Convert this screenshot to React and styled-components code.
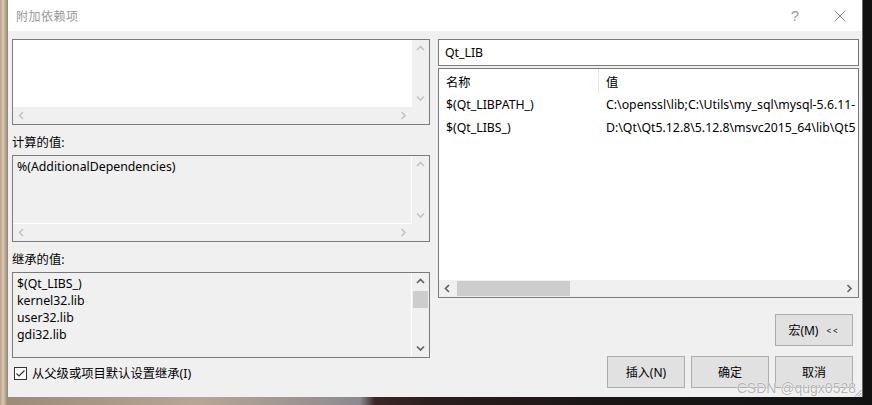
import React from 'react';
import styled, { createGlobalStyle } from 'styled-components';

const GlobalStyle = createGlobalStyle`
  html, body {
    margin: 0;
    padding: 0;
  }
  body {
    width: 872px;
    height: 405px;
    overflow: hidden;
    font-family: "Noto Sans", "Noto Sans CJK SC", sans-serif;
    font-size: 12.3px;
    color: #000;
  }
`;

// wallpaper peeking round the dialog
const Desktop = styled.div`
  width: 872px;
  height: 405px;
  padding-left: 7px;
  box-sizing: border-box;
  background:
    linear-gradient(90deg, transparent 0 863px, #111 863px),
    radial-gradient(ellipse 6px 14px at 868px 48px, #d8d4c8, transparent),
    linear-gradient(90deg, #b9a083 0, #d8c9b6 3px, #a89074 7px, transparent 7px),
    linear-gradient(90deg, #9c8a78 0, #b7a595 200px, #8c8a90 360px, #3a2626 375px, #2a1d1d 440px, #1a1616 600px, #121212 872px);
`;

const Dialog = styled.div`
  position: relative;
  width: 856px;
  height: 397px;
  background: #f0f0f0;
  border-left: 1px solid #8c8c8c;
  border-right: 1px solid #6b6b6b;
  box-sizing: border-box;
  display: flex;
  flex-direction: column;
`;

const TitleBar = styled.div`
  height: 31px;
  flex: none;
  background: #fff;
  display: flex;
  align-items: center;
  padding-left: 8px;
`;

const Title = styled.span`
  flex: 1;
  color: #999;
  font-size: 12px;
  letter-spacing: 0.5px;
`;

const CaptionButton = styled.div`
  width: ${p => p.$w}px;
  height: 31px;
  display: flex;
  align-items: center;
  justify-content: center;
  color: #9a9a9a;
  font-family: "Liberation Sans", sans-serif;
  font-size: 15px;
`;

const Body = styled.div`
  flex: 1;
  display: flex;
  gap: 8px;
  padding: 8px 3px 0 4px;
`;

const LeftColumn = styled.div`
  width: 418px;
  display: flex;
  flex-direction: column;
`;

const RightColumn = styled.div`
  width: 421px;
  display: flex;
  flex-direction: column;
`;

const FieldLabel = styled.div`
  height: 30px;
  box-sizing: border-box;
  padding-top: 9px;
  line-height: 17px;
`;

const Frame = styled.div`
  height: ${p => p.$h}px;
  flex: none;
  box-sizing: border-box;
  border: 1px solid #7a7a7a;
  background: #f0f0f0;
  display: grid;
  grid-template-columns: 1fr ${p => (p.$v ? '17px' : '0')};
  grid-template-rows: 1fr ${p => (p.$hs ? '17px' : '0')};
  overflow: hidden;
`;

const Content = styled.div`
  background: ${p => (p.$disabled ? '#f0f0f0' : '#fff')};
  border-right: ${p => (p.$sep ? '1px solid #fff' : 'none')};
  border-bottom: ${p => (p.$sepB ? '1px solid #fff' : 'none')};
  padding: 2px 4px;
  line-height: 17px;
  overflow: hidden;
  white-space: nowrap;
`;

const VBar = styled.div`
  display: flex;
  flex-direction: column;
  background: #f0f0f0;
`;

const HBar = styled.div`
  display: flex;
  align-items: stretch;
  background: #f0f0f0;
  grid-column: ${p => (p.$full ? '1 / 3' : '1 / 2')};
`;

const ArrowCell = styled.div`
  width: 17px;
  height: 17px;
  flex: none;
  display: flex;
  align-items: center;
  justify-content: center;
`;

const Track = styled.div`
  flex: 1;
  display: flex;
  flex-direction: ${p => (p.$vertical ? 'column' : 'row')};
`;

const Thumb = styled.div`
  background: #cdcdcd;
  ${p =>
    p.$vertical
      ? `height: ${p.$len}px; margin: 1px 1px 0 1px;`
      : `width: ${p.$len}px; margin: 1px 0 1px ${p.$offset}px;`}
`;

const Corner = styled.div`
  background: #f0f0f0;
`;

const Chevron = ({ dir, color }) => {
  const paths = {
    up: 'M1 5 L4.5 1.5 L8 5',
    down: 'M1 1.5 L4.5 5 L8 1.5',
    left: 'M5 1 L1.5 4.5 L5 8',
    right: 'M1.5 1 L5 4.5 L1.5 8',
  };
  const vert = dir === 'up' || dir === 'down';
  return (
    <svg width={vert ? 9 : 7} height={vert ? 7 : 9} viewBox={vert ? '0 0 9 7' : '0 0 7 9'}>
      <path d={paths[dir]} fill="none" stroke={color} strokeWidth="1.6" />
    </svg>
  );
};

const VScroll = ({ enabled, thumb }) => {
  const c = enabled ? '#606060' : '#c4c4c4';
  return (
    <VBar>
      <ArrowCell><Chevron dir="up" color={c} /></ArrowCell>
      <Track $vertical>{thumb && <Thumb $vertical $len={17} />}</Track>
      <ArrowCell><Chevron dir="down" color={c} /></ArrowCell>
    </VBar>
  );
};

const HScroll = ({ enabled, thumb, full }) => {
  const c = enabled ? '#606060' : '#c4c4c4';
  return (
    <HBar $full={full}>
      <ArrowCell><Chevron dir="left" color={c} /></ArrowCell>
      <Track>{thumb && <Thumb $len={thumb.len} $offset={thumb.offset} />}</Track>
      <ArrowCell><Chevron dir="right" color={c} /></ArrowCell>
    </HBar>
  );
};

const TextInput = styled.div`
  height: 27px;
  box-sizing: border-box;
  border: 1px solid #7a7a7a;
  background: #fff;
  padding-left: 6px;
  display: flex;
  align-items: center;
`;

const List = styled.div`
  margin-top: 2px;
  height: 230px;
  box-sizing: border-box;
  border: 1px solid #7a7a7a;
  background: #fff;
  display: flex;
  flex-direction: column;
`;

const ListBody = styled.div`
  flex: 1;
  overflow: hidden;
`;

const Row = styled.div`
  display: flex;
  height: ${p => (p.$header ? 24 : 23)}px;
  align-items: center;
  white-space: nowrap;
`;

const Cell = styled.div`
  box-sizing: border-box;
  height: 100%;
  display: flex;
  align-items: center;
  padding-left: 7px;
  overflow: hidden;
  ${p => (p.$first ? 'width: 160px; flex: none;' : 'flex: 1;')}
  ${p => (p.$first && p.$header ? 'border-right: 1px solid #e5e5e5;' : '')}
  ${p => (p.$header ? 'padding-top: 1px;' : '')}
`;

const ButtonArea = styled.div`
  display: flex;
  flex-direction: column;
  align-items: flex-end;
  padding-right: 6px;
`;

const ButtonRow = styled.div`
  display: flex;
  gap: 6px;
  margin-top: ${p => p.$mt}px;
`;

const Button = styled.div`
  width: 78px;
  height: 32px;
  box-sizing: border-box;
  border: 1px solid #adadad;
  background: #e1e1e1;
  display: flex;
  align-items: center;
  justify-content: center;
  font-size: 12px;
`;

const Small = styled.span`
  font-size: 8px;
  margin-left: 8px;
  letter-spacing: 2px;
`;

const CheckRow = styled.label`
  display: flex;
  align-items: center;
  gap: 5px;
  margin-top: 9px;
  padding-left: 2px;
  line-height: 13px;
`;

const CheckBox = styled.span`
  width: 13px;
  height: 13px;
  box-sizing: border-box;
  border: 1px solid #333;
  background: #fff;
  display: flex;
  align-items: center;
  justify-content: center;
`;

const Watermark = styled.div`
  position: absolute;
  right: 6px;
  bottom: 1px;
  font-family: "Liberation Sans", sans-serif;
  font-size: 14px;
  color: #b4b4b4;
  text-shadow: 0 0 1px #fff, 0 0 1px #fff;
  pointer-events: none;
`;

const Grip = styled.svg`
  position: absolute;
  right: 0;
  bottom: 0;
`;

const inherited = ['$(Qt_LIBS_)', 'kernel32.lib', 'user32.lib', 'gdi32.lib'];

const rows = [
  ['$(Qt_LIBPATH_)', 'C:\\openssl\\lib;C:\\Utils\\my_sql\\mysql-5.6.11-'],
  ['$(Qt_LIBS_)', 'D:\\Qt\\Qt5.12.8\\5.12.8\\msvc2015_64\\lib\\Qt5'],
];

export default function App() {
  return (
    <>
      <GlobalStyle />
      <Desktop>
        <Dialog>
          <TitleBar>
            <Title>附加依赖项</Title>
            <CaptionButton $w={46}>?</CaptionButton>
            <CaptionButton $w={44}>
              <svg width="12" height="12" viewBox="0 0 12 12">
                <path d="M0.5 0.5 L11.5 11.5 M11.5 0.5 L0.5 11.5" stroke="#8a8a8a" strokeWidth="1" />
              </svg>
            </CaptionButton>
          </TitleBar>

          <Body>
            <LeftColumn>
              <Frame $h={86} $v $hs>
                <Content />
                <VScroll />
                <HScroll />
                <Corner />
              </Frame>

              <FieldLabel>计算的值:</FieldLabel>
              <Frame $h={87} $v $hs>
                <Content $disabled $sep $sepB>%(AdditionalDependencies)</Content>
                <VScroll />
                <HScroll />
                <Corner />
              </Frame>

              <FieldLabel>继承的值:</FieldLabel>
              <Frame $h={86} $v>
                <Content $disabled $sep>
                  {inherited.map(l => (
                    <div key={l}>{l}</div>
                  ))}
                </Content>
                <VScroll enabled thumb />
              </Frame>

              <CheckRow>
                <CheckBox>
                  <svg width="11" height="11" viewBox="0 0 11 11">
                    <path d="M1.5 5.5 L4 8 L9.5 2.5" fill="none" stroke="#333" strokeWidth="1.2" />
                  </svg>
                </CheckBox>
                从父级或项目默认设置继承(I)
              </CheckRow>
            </LeftColumn>

            <RightColumn>
              <TextInput>Qt_LIB</TextInput>
              <List>
                <ListBody>
                  <Row $header>
                    <Cell $first $header>名称</Cell>
                    <Cell $header>值</Cell>
                  </Row>
                  {rows.map(([name, value]) => (
                    <Row key={name}>
                      <Cell $first>{name}</Cell>
                      <Cell>{value}</Cell>
                    </Row>
                  ))}
                </ListBody>
                <HScroll enabled full thumb={{ len: 113, offset: 1 }} />
              </List>

              <ButtonArea>
                <ButtonRow $mt={16}>
                  <Button>宏(M)<Small>&lt;&lt;</Small></Button>
                </ButtonRow>
                <ButtonRow $mt={10}>
                  <Button>插入(N)</Button>
                  <Button>确定</Button>
                  <Button>取消</Button>
                </ButtonRow>
              </ButtonArea>
            </RightColumn>
          </Body>

          <Watermark>CSDN @qugx0528</Watermark>
          <Grip width="8" height="8" viewBox="0 0 8 8">
            <path d="M7.5 1 L1 7.5 M7.5 4 L4 7.5 M7.5 6.5 L6.5 7.5" stroke="#a0a0a0" strokeWidth="1" />
          </Grip>
        </Dialog>
      </Desktop>
    </>
  );
}
